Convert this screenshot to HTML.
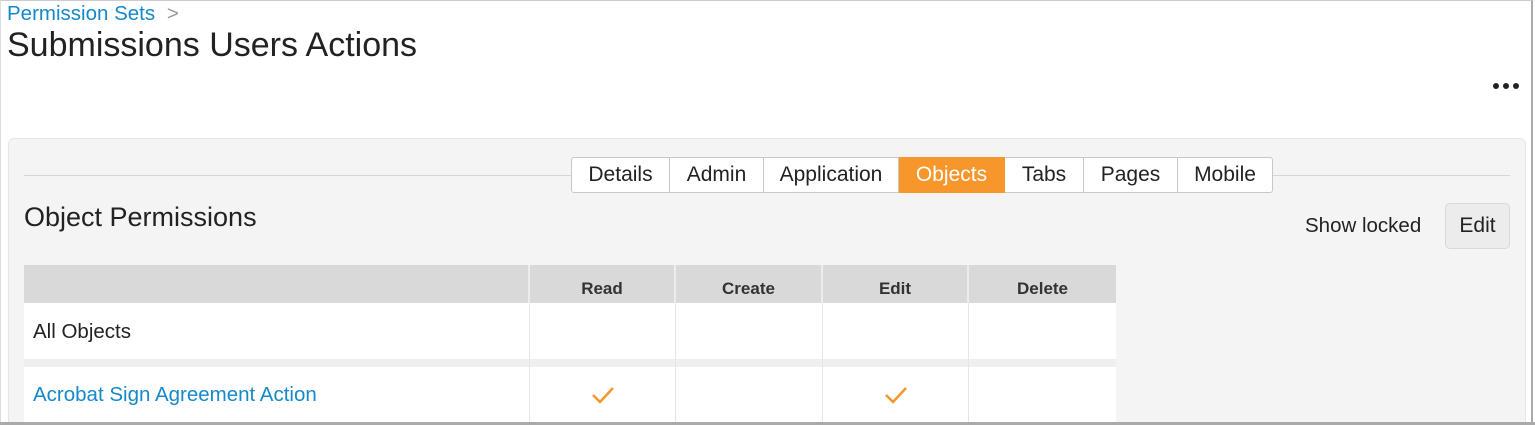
<!DOCTYPE html><html><head><meta charset="utf-8"><style>
*{margin:0;padding:0;box-sizing:border-box}
html,body{width:1535px;height:425px;overflow:hidden}
body{background:#fff;font-family:"Liberation Sans",Arial,sans-serif;position:relative;color:#222}
.a{position:absolute}
.frame{left:0;top:0;width:1533px;height:425px;border-top:1px solid #ccc;border-right:2px solid #aaa;border-left:1px solid #ddd}
.panel{left:8px;top:138px;width:1518px;height:284px;background:#f4f4f4;border:1px solid #e6e6e6;border-bottom:none;border-radius:6px 6px 0 0}
.tab{top:157px;height:36px;background:#fff;border:1px solid #c8c8c8;border-left:none;font-size:21px;text-align:center;line-height:34px;color:#222}
.hd{top:265px;height:38px;background:#d9d9d9;border-right:2px solid #ececec;font-weight:bold;font-size:17px;text-align:center;line-height:48px;color:#333}
</style></head><body>
<div class="a frame"></div>
<div class="a" style="left:7px;top:2px;font-size:20.5px;color:#1589c9">Permission Sets <span style="color:#999;margin-left:6px">&gt;</span></div>
<div class="a" style="left:7px;top:26px;font-size:34px;color:#222">Submissions Users Actions</div>
<svg class="a" style="left:1492px;top:81px" width="30" height="10"><circle cx="4" cy="5" r="3" fill="#222"/><circle cx="14" cy="5" r="3" fill="#222"/><circle cx="24" cy="5" r="3" fill="#222"/></svg>
<div class="a panel"></div>
<div class="a" style="left:24px;top:175px;width:1486px;height:1px;background:#d6d6d6"></div>
<div class="a tab" style="left:571px;width:99px;border-left:1px solid #c8c8c8;border-radius:3px 0 0 3px">Details</div>
<div class="a tab" style="left:670px;width:94px">Admin</div>
<div class="a tab" style="left:764px;width:135px">Application</div>
<div class="a tab" style="left:899px;width:106px;background:#f7962b;border-color:#f7962b;color:#fff">Objects</div>
<div class="a tab" style="left:1005px;width:79px">Tabs</div>
<div class="a tab" style="left:1084px;width:94px">Pages</div>
<div class="a tab" style="left:1178px;width:95px;border-radius:0 3px 3px 0">Mobile</div>
<div class="a" style="left:24px;top:202px;font-size:27px;color:#222">Object Permissions</div>
<div class="a" style="left:1305px;top:214px;font-size:20.5px;color:#222">Show locked</div>
<div class="a" style="left:1445px;top:203px;width:65px;height:46px;border:1px solid #d8d8d8;border-radius:5px;background:#ececec;font-size:21px;text-align:center;line-height:44px;color:#222">Edit</div>
<div class="a hd" style="left:24px;width:506px"></div>
<div class="a hd" style="left:530px;width:146px">Read</div>
<div class="a hd" style="left:676px;width:147px">Create</div>
<div class="a hd" style="left:823px;width:146px">Edit</div>
<div class="a hd" style="left:969px;width:147px;border-right:none">Delete</div>
<div class="a" style="left:24px;top:303px;width:1092px;height:56px;background:#fff"></div>
<div class="a" style="left:24px;top:359px;width:1092px;height:8px;background:#efefef"></div>
<div class="a" style="left:24px;top:367px;width:1092px;height:56px;background:#fff"></div>
<div class="a" style="left:529px;top:303px;width:1px;height:120px;background:#e6e6e6"></div>
<div class="a" style="left:675px;top:303px;width:1px;height:120px;background:#e6e6e6"></div>
<div class="a" style="left:822px;top:303px;width:1px;height:120px;background:#e6e6e6"></div>
<div class="a" style="left:968px;top:303px;width:1px;height:120px;background:#e6e6e6"></div>
<div class="a" style="left:33px;top:320px;font-size:20.5px;color:#222">All Objects</div>
<div class="a" style="left:33px;top:383px;font-size:20.5px;color:#1589c9">Acrobat Sign Agreement Action</div>
<svg class="a" style="left:591px;top:385px" width="24" height="20"><path d="M2 10 L9 17 L22 3" fill="none" stroke="#f7962b" stroke-width="2.5"/></svg>
<svg class="a" style="left:884px;top:385px" width="24" height="20"><path d="M2 10 L9 17 L22 3" fill="none" stroke="#f7962b" stroke-width="2.5"/></svg>
<div class="a" style="left:0;top:422px;width:1535px;height:3px;background:#aaa"></div>
</body></html>
